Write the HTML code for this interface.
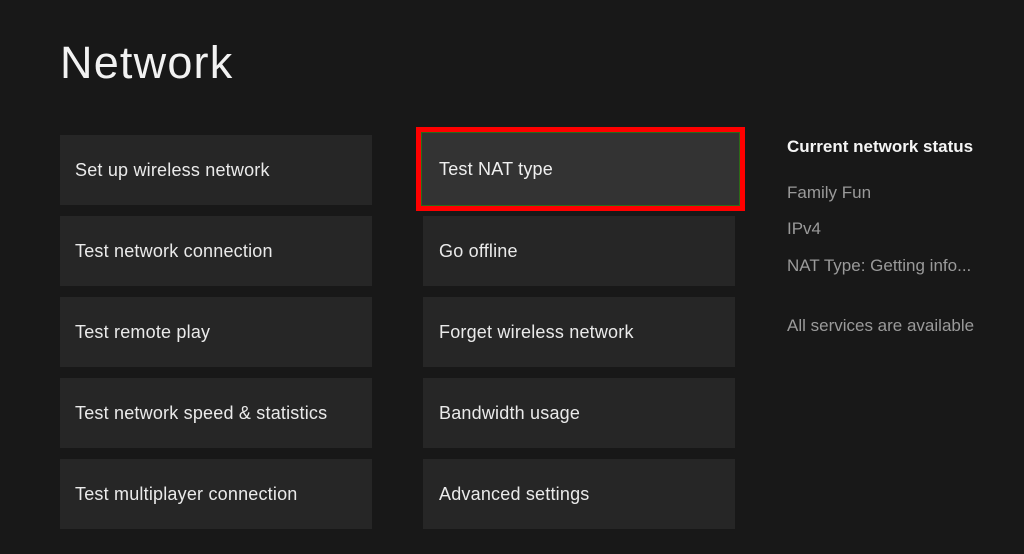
<!DOCTYPE html>
<html><head><style>
body{margin:0;width:1024px;height:554px;background:#181818;overflow:hidden;font-family:"Liberation Sans",sans-serif;position:relative}
h1{position:absolute;left:60px;top:37px;margin:0;font-weight:normal;font-size:45px;color:#f2f2f2;letter-spacing:1.2px}
.t{position:absolute;width:312px;height:70px;background:#262626;color:#eaeaea;font-size:18px;line-height:70px;box-sizing:border-box;padding-left:15px;letter-spacing:0.2px}
.c1{left:60px}.c2{left:423px;padding-left:16px}
.sel{position:absolute;left:416px;top:127px;width:329px;height:84px;box-sizing:border-box;border:5px solid #f00}
.sel div{position:absolute;inset:0;border:1px solid #2a6a1a;background:#333;color:#f0f0f0;font-size:18px;line-height:72px;padding-left:17px;letter-spacing:0.2px}
.s{position:absolute;left:787px;color:#9a9a9a;font-size:17px}
</style></head><body>
<h1>Network</h1>
<div class="t c1" style="top:135px">Set up wireless network</div>
<div class="t c1" style="top:216px">Test network connection</div>
<div class="t c1" style="top:297px">Test remote play</div>
<div class="t c1" style="top:378px">Test network speed &amp; statistics</div>
<div class="t c1" style="top:459px">Test multiplayer connection</div>
<div class="sel"><div>Test NAT type</div></div>
<div class="t c2" style="top:216px">Go offline</div>
<div class="t c2" style="top:297px">Forget wireless network</div>
<div class="t c2" style="top:378px">Bandwidth usage</div>
<div class="t c2" style="top:459px">Advanced settings</div>
<div class="s" style="top:137px;color:#f5f5f5;font-weight:bold">Current network status</div>
<div class="s" style="top:183px">Family Fun</div>
<div class="s" style="top:219px">IPv4</div>
<div class="s" style="top:256px">NAT Type: Getting info...</div>
<div class="s" style="top:316px">All services are available</div>
</body></html>
